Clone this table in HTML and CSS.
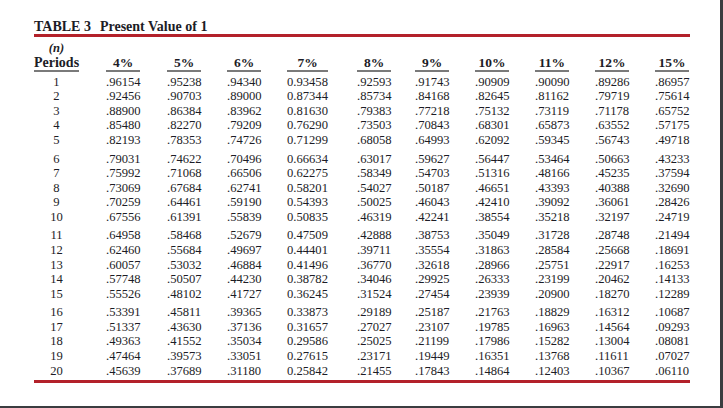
FILE: index.html
```html
<!DOCTYPE html>
<html>
<head>
<meta charset="utf-8">
<link rel="stylesheet" href="styles.css">
</head>
<body>
<div class="page">
  <div class="title"><span>TABLE 3</span><span>Present Value of 1</span></div>
  <div class="rule"></div>
  <div class="tbl">
    <div class="row head">
      <div class="per"><div class="n">(n)</div><div class="hd">Periods</div></div>
      <div class="hd">4%</div><div class="hd">5%</div><div class="hd">6%</div><div class="hd w7">7%</div><div class="hd">8%</div><div class="hd">9%</div><div class="hd">10%</div><div class="hd">11%</div><div class="hd">12%</div><div class="hd">15%</div>
    </div>
    <div class="group first">
      <div class="row"><div class="per">1</div><div>.96154</div><div>.95238</div><div>.94340</div><div>0.93458</div><div>.92593</div><div>.91743</div><div>.90909</div><div>.90090</div><div>.89286</div><div>.86957</div></div>
      <div class="row"><div class="per">2</div><div>.92456</div><div>.90703</div><div>.89000</div><div>0.87344</div><div>.85734</div><div>.84168</div><div>.82645</div><div>.81162</div><div>.79719</div><div>.75614</div></div>
      <div class="row"><div class="per">3</div><div>.88900</div><div>.86384</div><div>.83962</div><div>0.81630</div><div>.79383</div><div>.77218</div><div>.75132</div><div>.73119</div><div>.71178</div><div>.65752</div></div>
      <div class="row"><div class="per">4</div><div>.85480</div><div>.82270</div><div>.79209</div><div>0.76290</div><div>.73503</div><div>.70843</div><div>.68301</div><div>.65873</div><div>.63552</div><div>.57175</div></div>
      <div class="row"><div class="per">5</div><div>.82193</div><div>.78353</div><div>.74726</div><div>0.71299</div><div>.68058</div><div>.64993</div><div>.62092</div><div>.59345</div><div>.56743</div><div>.49718</div></div>
    </div>
    <div class="group">
      <div class="row"><div class="per">6</div><div>.79031</div><div>.74622</div><div>.70496</div><div>0.66634</div><div>.63017</div><div>.59627</div><div>.56447</div><div>.53464</div><div>.50663</div><div>.43233</div></div>
      <div class="row"><div class="per">7</div><div>.75992</div><div>.71068</div><div>.66506</div><div>0.62275</div><div>.58349</div><div>.54703</div><div>.51316</div><div>.48166</div><div>.45235</div><div>.37594</div></div>
      <div class="row"><div class="per">8</div><div>.73069</div><div>.67684</div><div>.62741</div><div>0.58201</div><div>.54027</div><div>.50187</div><div>.46651</div><div>.43393</div><div>.40388</div><div>.32690</div></div>
      <div class="row"><div class="per">9</div><div>.70259</div><div>.64461</div><div>.59190</div><div>0.54393</div><div>.50025</div><div>.46043</div><div>.42410</div><div>.39092</div><div>.36061</div><div>.28426</div></div>
      <div class="row"><div class="per">10</div><div>.67556</div><div>.61391</div><div>.55839</div><div>0.50835</div><div>.46319</div><div>.42241</div><div>.38554</div><div>.35218</div><div>.32197</div><div>.24719</div></div>
    </div>
    <div class="group">
      <div class="row"><div class="per">11</div><div>.64958</div><div>.58468</div><div>.52679</div><div>0.47509</div><div>.42888</div><div>.38753</div><div>.35049</div><div>.31728</div><div>.28748</div><div>.21494</div></div>
      <div class="row"><div class="per">12</div><div>.62460</div><div>.55684</div><div>.49697</div><div>0.44401</div><div>.39711</div><div>.35554</div><div>.31863</div><div>.28584</div><div>.25668</div><div>.18691</div></div>
      <div class="row"><div class="per">13</div><div>.60057</div><div>.53032</div><div>.46884</div><div>0.41496</div><div>.36770</div><div>.32618</div><div>.28966</div><div>.25751</div><div>.22917</div><div>.16253</div></div>
      <div class="row"><div class="per">14</div><div>.57748</div><div>.50507</div><div>.44230</div><div>0.38782</div><div>.34046</div><div>.29925</div><div>.26333</div><div>.23199</div><div>.20462</div><div>.14133</div></div>
      <div class="row"><div class="per">15</div><div>.55526</div><div>.48102</div><div>.41727</div><div>0.36245</div><div>.31524</div><div>.27454</div><div>.23939</div><div>.20900</div><div>.18270</div><div>.12289</div></div>
    </div>
    <div class="group">
      <div class="row"><div class="per">16</div><div>.53391</div><div>.45811</div><div>.39365</div><div>0.33873</div><div>.29189</div><div>.25187</div><div>.21763</div><div>.18829</div><div>.16312</div><div>.10687</div></div>
      <div class="row"><div class="per">17</div><div>.51337</div><div>.43630</div><div>.37136</div><div>0.31657</div><div>.27027</div><div>.23107</div><div>.19785</div><div>.16963</div><div>.14564</div><div>.09293</div></div>
      <div class="row"><div class="per">18</div><div>.49363</div><div>.41552</div><div>.35034</div><div>0.29586</div><div>.25025</div><div>.21199</div><div>.17986</div><div>.15282</div><div>.13004</div><div>.08081</div></div>
      <div class="row"><div class="per">19</div><div>.47464</div><div>.39573</div><div>.33051</div><div>0.27615</div><div>.23171</div><div>.19449</div><div>.16351</div><div>.13768</div><div>.11611</div><div>.07027</div></div>
      <div class="row"><div class="per">20</div><div>.45639</div><div>.37689</div><div>.31180</div><div>0.25842</div><div>.21455</div><div>.17843</div><div>.14864</div><div>.12403</div><div>.10367</div><div>.06110</div></div>
    </div>
  </div>
  <div class="rule bottom"></div>
</div>
</body>
</html>
```

FILE: styles.css
```css
html, body {
  margin: 0;
  padding: 0;
  background: #3b3d40;
}
.page {
  width: 720px;
  height: 406px;
  background: #ffffff;
  box-sizing: border-box;
  padding: 20px 0 0 34px;
  font-family: "Liberation Serif", "Times New Roman", serif;
  color: #1c1c26;
}
.title {
  display: flex;
  gap: 9px;
  font-weight: bold;
  font-size: 14px;
  line-height: 14px;
  height: 14px;
}
.rule {
  width: 656px;
  height: 3px;
  background: #b3212a;
}
.rule.bottom {
  margin-top: 2px;
}
.tbl {
  margin-top: 6px;
  font-size: 12.6px;
}
.row {
  display: grid;
  grid-template-columns: 72px 61px 60px 60px 70px 58px 60px 60px 60px 60px 35px;
  height: 14.6px;
  line-height: 14.6px;
  white-space: nowrap;
}
.row .per {
  width: 45px;
  text-align: center;
}
.row.head {
  height: auto;
  line-height: 13px;
  align-items: end;
  font-weight: bold;
  font-size: 13.5px;
  margin-bottom: 2.7px;
}
.n {
  font-style: italic;
  text-align: center;
  line-height: 11px;
  font-size: 12.5px;
  margin-bottom: 2px;
}
.hd {
  width: 34px;
  text-align: center;
  border-bottom: 2px solid #7a7a7a;
  padding-bottom: 1px;
}
.per .hd {
  width: 45px;
  font-size: 14px;
}
.hd.w7 {
  width: 41px;
}
.group + .group {
  margin-top: 3.9px;
}
```
